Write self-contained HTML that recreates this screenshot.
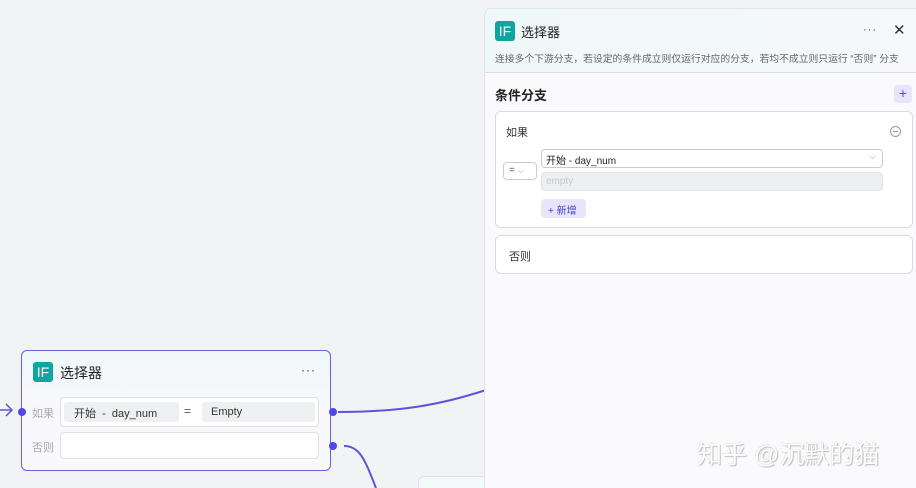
<!DOCTYPE html>
<html><head><meta charset="utf-8"><style>
*{box-sizing:border-box;margin:0;padding:0}
html,body{width:916px;height:488px;overflow:hidden}
body{background:#f2f3f5;font-family:"Liberation Sans","Noto Sans CJK SC",sans-serif;position:relative;
background-image:radial-gradient(#e3e4e8 1px,transparent 1px);background-size:16px 16px}
.abs{position:absolute}
.ic{background:#0fa5a0;color:#fff;border-radius:3px;font-size:14px;display:flex;align-items:center;justify-content:center;font-weight:normal}
.node{left:21px;top:350px;width:310px;height:121px;border:1.5px solid #6a5fd6;border-radius:6px;background:linear-gradient(#eef8f8,#f7f8fb 40%,#f9f9fc)}
.dot{width:8px;height:8px;border-radius:50%;background:#5147e6}
.panel{left:484px;top:8px;width:432px;height:480px;background:#fafafc;border-left:1px solid #e2e3e8;border-top:1px solid #e2e3e8;border-top-left-radius:8px}
.box{border:1px solid #d9dae0;border-radius:6px;background:#fff}
</style></head><body>
<svg class="abs" style="left:0;top:0" width="916" height="488">
<path d="M338 412 C400 412 440 405 486 390" stroke="#5d55d8" stroke-width="2" fill="none"/>
<path d="M344 446 C360 446 365 460 376 488" stroke="#5d55d8" stroke-width="2" fill="none"/>
<path d="M0 410 H12 M6 404 L12 410 L6 416" stroke="#5d55d8" stroke-width="1.5" fill="none"/>
</svg>
<div class="abs" style="left:418px;top:476px;width:70px;height:20px;border:1px solid #dde;border-radius:6px;background:#f3fafa"></div>
<div class="abs node">
 <div class="abs ic" style="left:11px;top:11px;width:20px;height:20px">IF</div>
 <div class="abs" style="left:38px;top:12px;font-size:14px;color:#222">选择器</div>
 <div class="abs" style="left:279px;top:12px;font-size:12px;color:#333;letter-spacing:1px">···</div>
 <div class="abs" style="left:10px;top:54px;font-size:11px;color:#aaa">如果</div>
 <div class="abs" style="left:10px;top:88px;font-size:11px;color:#aaa">否则</div>
 <div class="abs" style="left:38px;top:46px;width:259px;height:30px;border:1px solid #e0e1e6;border-radius:4px;background:#fff"></div>
 <div class="abs" style="left:42px;top:51px;width:115px;height:20px;background:#eff0f4;border-radius:3px;font-size:11px;color:#333;padding:3px 0 0 10px">开始 &nbsp;- &nbsp;day_num</div>
 <div class="abs" style="left:162px;top:53px;font-size:12px;color:#555">=</div>
 <div class="abs" style="left:180px;top:51px;width:113px;height:20px;background:#eff0f4;border-radius:3px;font-size:11px;color:#333;padding:4px 0 0 9px">Empty</div>
 <div class="abs" style="left:38px;top:81px;width:259px;height:27px;border:1px solid #e0e1e6;border-radius:4px;background:#fff"></div>
</div>
<div class="abs dot" style="left:18px;top:408px"></div>
<div class="abs dot" style="left:329px;top:408px"></div>
<div class="abs dot" style="left:329px;top:442px"></div>

<div class="abs panel">
 <div class="abs" style="left:0;top:0;width:431px;height:64px;background:linear-gradient(90deg,#eef8f8,#f6f8fb);border-bottom:1px solid #dcdde2;border-top-left-radius:8px"></div>
 <div class="abs ic" style="left:10px;top:12px;width:20px;height:20px">IF</div>
 <div class="abs" style="left:36px;top:13px;font-size:13px;color:#222">选择器</div>
 <div class="abs" style="left:378px;top:15px;font-size:11px;color:#444;letter-spacing:1px">···</div>
 <div class="abs" style="left:408px;top:12px;font-size:15px;color:#333">✕</div>
 <div class="abs" style="left:10px;top:42px;font-size:9.8px;color:#666;white-space:nowrap">连接多个下游分支，若设定的条件成立则仅运行对应的分支，若均不成立则只运行 “否则” 分支</div>
 <div class="abs" style="left:10px;top:76px;font-size:13px;font-weight:bold;color:#222">条件分支</div>
 <div class="abs" style="left:409px;top:76px;width:18px;height:18px;background:#e6e5fb;border-radius:3px;color:#5a50d8;font-size:14px;text-align:center;line-height:17px">+</div>
 <div class="abs box" style="left:10px;top:102px;width:418px;height:117px">
  <div class="abs" style="left:10px;top:12px;font-size:11px;color:#333">如果</div>
  <div class="abs" style="left:394px;top:14px;width:11px;height:11px;border:1px solid #999;border-radius:50%"><div style="margin:4px 2px;height:1px;background:#999"></div></div>
  <div class="abs" style="left:7px;top:50px;width:34px;height:18px;border:1px solid #ccc;border-radius:4px;font-size:10px;color:#555;padding:2px 0 0 5px">= <span style="font-size:8px;color:#999">⌵</span></div>
  <div class="abs" style="left:45px;top:37px;width:342px;height:19px;border:1px solid #ccc;border-radius:4px;font-size:10px;color:#222;padding:2px 0 0 4px">开始 - day_num<span class="abs" style="right:6px;top:1px;color:#999;font-size:9px">⌵</span></div>
  <div class="abs" style="left:45px;top:60px;width:342px;height:19px;background:#eeeff2;border:1px solid #e2e3e6;border-radius:4px;font-size:10px;color:#c6c7cc;padding:3px 0 0 4px">empty</div>
  <div class="abs" style="left:45px;top:87px;width:45px;height:19px;background:#e6e5fb;border-radius:4px;font-size:10px;color:#4a40c8;padding:3px 0 0 7px">+ 新增</div>
 </div>
 <div class="abs box" style="left:10px;top:226px;width:418px;height:39px">
  <div class="abs" style="left:13px;top:12px;font-size:11px;color:#333">否则</div>
 </div>
 <div class="abs" style="left:212px;top:426px;font-size:25px;color:#fff;text-shadow:1px 1px 1px #bbb,-0.5px -0.5px 0 #ddd;white-space:nowrap">知乎 @沉默的猫</div>
</div>
</body></html>
